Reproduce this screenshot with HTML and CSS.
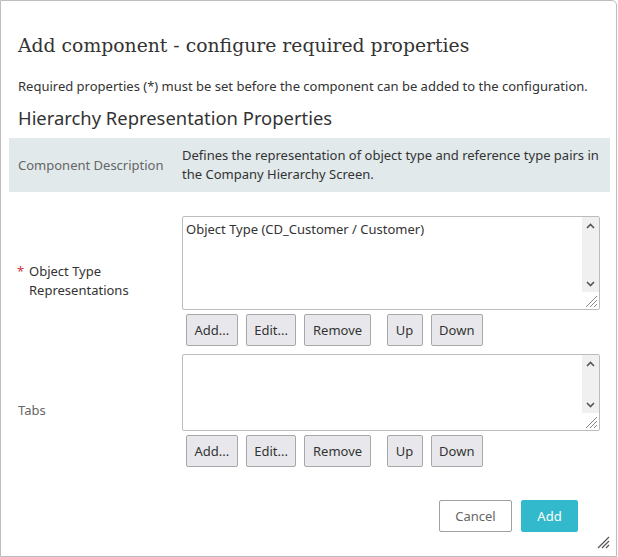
FILE: index.html
```html
<!DOCTYPE html>
<html>
<head>
<meta charset="utf-8">
<link rel="stylesheet" href="styles.css">
</head>
<body>
<div class="dialog">
  <h1 class="title">Add component - configure required properties</h1>
  <p class="intro">Required properties (*) must be set before the component can be added to the configuration.</p>
  <h2 class="section">Hierarchy Representation Properties</h2>
  <div class="band">
    <div class="band-label">Component Description</div>
    <div class="band-text">Defines the representation of object type and reference type pairs in the Company Hierarchy Screen.</div>
  </div>

  <div class="row">
    <div class="label"><span class="req">*</span><span>Object Type Representations</span></div>
    <div class="value">
      <div class="list tall">
        <div class="list-body">Object Type (CD_Customer / Customer)</div>
        <div class="scroll">
          <div class="track">
            <svg class="arrow" width="9" height="6" viewBox="0 0 9 6"><path d="M1 5 L4.5 1.5 L8 5" fill="none" stroke="#555" stroke-width="1.6"/></svg>
            <svg class="arrow" width="9" height="6" viewBox="0 0 9 6"><path d="M1 1 L4.5 4.5 L8 1" fill="none" stroke="#555" stroke-width="1.6"/></svg>
          </div>
          <svg class="grip" width="17" height="17" viewBox="0 0 17 17"><path d="M15 4 L4 15 M15 8 L8 15 M15 12 L12 15" stroke="#888" stroke-width="1"/></svg>
        </div>
      </div>
      <div class="buttons">
        <button class="btn">Add...</button>
        <button class="btn">Edit...</button>
        <button class="btn">Remove</button>
        <button class="btn sep">Up</button>
        <button class="btn">Down</button>
      </div>
    </div>
  </div>

  <div class="row">
    <div class="label plain">Tabs</div>
    <div class="value">
      <div class="list short">
        <div class="list-body"></div>
        <div class="scroll">
          <div class="track">
            <svg class="arrow" width="9" height="6" viewBox="0 0 9 6"><path d="M1 5 L4.5 1.5 L8 5" fill="none" stroke="#555" stroke-width="1.6"/></svg>
            <svg class="arrow" width="9" height="6" viewBox="0 0 9 6"><path d="M1 1 L4.5 4.5 L8 1" fill="none" stroke="#555" stroke-width="1.6"/></svg>
          </div>
          <svg class="grip" width="17" height="17" viewBox="0 0 17 17"><path d="M15 4 L4 15 M15 8 L8 15 M15 12 L12 15" stroke="#888" stroke-width="1"/></svg>
        </div>
      </div>
      <div class="buttons">
        <button class="btn">Add...</button>
        <button class="btn">Edit...</button>
        <button class="btn">Remove</button>
        <button class="btn sep">Up</button>
        <button class="btn">Down</button>
      </div>
    </div>
  </div>

  <div class="footer">
    <button class="fbtn cancel">Cancel</button>
    <button class="fbtn primary">Add</button>
  </div>
  <svg class="dialog-grip" width="14" height="14" viewBox="0 0 14 14"><path d="M13 2 L2 13 M13 6 L6 13 M13 10 L10 13" stroke="#555" stroke-width="1.2"/></svg>
</div>
</body>
</html>
```

FILE: styles.css
```css
html, body {
  margin: 0;
  padding: 0;
  background: #ffffff;
}
body {
  font-family: "Noto Sans", "Open Sans", sans-serif;
  font-size: 13px;
  color: #333333;
}
.dialog {
  position: relative;
  box-sizing: border-box;
  width: 617px;
  height: 557px;
  border: 1px solid #bdbdbd;
  border-top-right-radius: 5px;
  padding: 0 6px 0 8px;
}
.title {
  margin: 31px 0 0 9px;
  font-family: "DejaVu Serif", "Liberation Serif", serif;
  font-weight: normal;
  font-size: 18.8px;
  line-height: 28px;
  color: #333333;
}
.intro {
  margin: 17px 0 0 9px;
  font-size: 13px;
  line-height: 18px;
}
.section {
  margin: 11px 0 0 9px;
  font-weight: normal;
  font-size: 18.4px;
  line-height: 24px;
  color: #333333;
}
.band {
  margin-top: 8px;
  background: #e1e9eb;
  display: flex;
  align-items: center;
  padding: 8px 0;
}
.band-label {
  box-sizing: border-box;
  width: 173px;
  padding-left: 9px;
  color: #666666;
  line-height: 19px;
  flex: none;
}
.band-text {
  flex: 1;
  line-height: 19px;
  padding-right: 8px;
}
.row {
  display: flex;
  align-items: center;
  margin-top: 8px;
}
.band + .row {
  margin-top: 24px;
}
.label {
  box-sizing: border-box;
  width: 173px;
  padding-left: 8px;
  flex: none;
  display: flex;
  line-height: 19px;
}
.label.plain {
  padding-left: 9px;
  color: #666666;
}
.req {
  color: #d0343a;
  width: 12px;
  flex: none;
}
.value {
  width: 418px;
  flex: none;
}
.list {
  box-sizing: border-box;
  border: 1px solid #bcbcbc;
  border-radius: 2px;
  display: flex;
  background: #fff;
}
.list.tall { height: 94px; }
.list.short { height: 77px; }
.list-body {
  flex: 1;
  padding: 3px 3px;
  line-height: 19px;
}
.scroll {
  width: 17px;
  display: flex;
  flex-direction: column;
}
.track {
  flex: 1;
  background: #f0f0f0;
  display: flex;
  flex-direction: column;
  justify-content: space-between;
  align-items: center;
  padding: 6px 0 5px;
}
.arrow { display: block; }
.grip { display: block; flex: none; }
.buttons {
  display: flex;
  gap: 8px;
  padding-left: 4px;
  margin-top: 4px;
}
.btn {
  height: 32px;
  min-width: 36px;
  box-sizing: border-box;
  background: #e8e8ec;
  border: 1px solid #a8a8a8;
  border-radius: 2px;
  padding: 0 7.5px;
  font-family: "Noto Sans", "Open Sans", sans-serif;
  font-size: 13px;
  color: #333333;
}
.btn.sep { margin-left: 8px; }
.footer {
  display: flex;
  justify-content: flex-end;
  gap: 9px;
  margin-top: 33px;
  padding-right: 32px;
}
.fbtn {
  height: 32px;
  box-sizing: border-box;
  border-radius: 2px;
  font-family: "Noto Sans", "Open Sans", sans-serif;
  font-size: 13px;
}
.fbtn.cancel {
  width: 73px;
  background: #ffffff;
  border: 1px solid #a0a0a0;
  color: #666666;
}
.fbtn.primary {
  width: 57px;
  background: #33b9cc;
  border: 1px solid #33b9cc;
  color: #ffffff;
}
.dialog-grip {
  position: absolute;
  right: 6px;
  bottom: 7px;
}
```
